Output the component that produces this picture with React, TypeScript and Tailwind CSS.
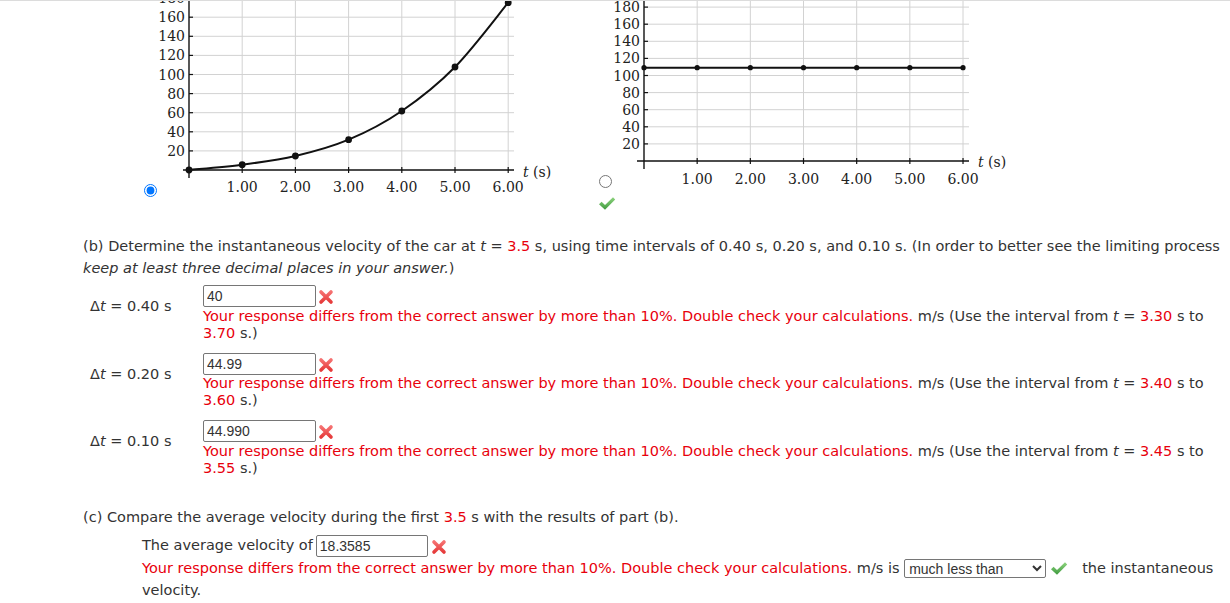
import React from "react";

// ---- graph helpers (page coordinates are used directly via viewBox offsets) ----
type Pt = [number, number];

function smoothPath(pts: Pt[]) {
  let d = `M${pts[0][0]},${pts[0][1]}`;
  for (let i = 0; i < pts.length - 1; i++) {
    const p0 = pts[i - 1] ?? pts[i];
    const p1 = pts[i];
    const p2 = pts[i + 1];
    const p3 = pts[i + 2] ?? p2;
    const c1x = p1[0] + (p2[0] - p0[0]) / 6;
    const c1y = p1[1] + (p2[1] - p0[1]) / 6;
    const c2x = p2[0] - (p3[0] - p1[0]) / 6;
    const c2y = p2[1] - (p3[1] - p1[1]) / 6;
    d += ` C${c1x},${c1y} ${c2x},${c2y} ${p2[0]},${p2[1]}`;
  }
  return d;
}

const GRID = "#d2d2d2";
const SERIF = "'DejaVu Serif', serif";

function Graph({
  vb,
  w,
  h,
  x0,
  y0,
  sx,
  sy,
  xEnd,
  axisTop,
  axisLeft,
  labelX,
  tickBase,
  tLabel,
  children,
}: {
  vb: string;
  w: number;
  h: number;
  x0: number;
  y0: number;
  sx: number;
  sy: number;
  xEnd: number;
  axisTop: number;
  axisLeft: number;
  labelX: number;
  tickBase: number;
  tLabel: Pt;
  children?: React.ReactNode;
}) {
  const ts = [1, 2, 3, 4, 5, 6];
  const vs = [20, 40, 60, 80, 100, 120, 140, 160, 180];
  return (
    <svg width={w} height={h} viewBox={vb} className="block shrink-0 overflow-visible">
      {ts.map((t) => (
        <line key={t} x1={x0 + sx * t} x2={x0 + sx * t} y1={axisTop} y2={y0} stroke={GRID} strokeWidth={1} />
      ))}
      {vs.map((v) => (
        <line key={v} x1={x0} x2={xEnd} y1={y0 - sy * v} y2={y0 - sy * v} stroke={GRID} strokeWidth={1} />
      ))}
      {/* axes */}
      <line x1={x0} x2={x0} y1={axisTop} y2={y0 + 8} stroke="#111" strokeWidth={1.4} />
      <line x1={axisLeft} x2={xEnd} y1={y0} y2={y0} stroke="#111" strokeWidth={1.4} />
      {ts.map((t) => (
        <line key={t} x1={x0 + sx * t} x2={x0 + sx * t} y1={y0 - 3} y2={y0 + 3} stroke="#111" strokeWidth={1.2} />
      ))}
      {vs.map((v) => (
        <line key={v} x1={x0} x2={x0 + 4} y1={y0 - sy * v} y2={y0 - sy * v} stroke="#111" strokeWidth={1.2} />
      ))}
      {vs.map((v) => (
        <text key={v} x={labelX} y={y0 - sy * v + 5} textAnchor="end" fontFamily={SERIF} fontSize={14} fill="#222">
          {v}
        </text>
      ))}
      {ts.map((t) => (
        <text key={t} x={x0 + sx * t} y={tickBase} textAnchor="middle" fontFamily={SERIF} fontSize={14} fill="#222">
          {t.toFixed(2)}
        </text>
      ))}
      <text x={tLabel[0]} y={tLabel[1]} fontFamily={SERIF} fontSize={14} fill="#222">
        <tspan fontStyle="italic">t</tspan> (s)
      </text>
      {children}
    </svg>
  );
}

function CrossIcon() {
  return (
    <svg width="16" height="16" viewBox="0 0 16 16" className="shrink-0">
      <defs>
        <linearGradient id="xg" x1="0" y1="0" x2="0" y2="1">
          <stop offset="0" stopColor="#f57070" />
          <stop offset="1" stopColor="#e63b3b" />
        </linearGradient>
      </defs>
      <path d="M3 3 L13 13 M13 3 L3 13" stroke="url(#xg)" strokeWidth="3.6" strokeLinecap="round" />
    </svg>
  );
}

function CheckIcon() {
  return (
    <svg width="18" height="15" viewBox="0 0 18 15" className="shrink-0">
      <defs>
        <linearGradient id="cg" x1="0" y1="0" x2="0" y2="1">
          <stop offset="0" stopColor="#8fd47f" />
          <stop offset="1" stopColor="#3e9a3e" />
        </linearGradient>
      </defs>
      <path d="M1 8.2 L3.6 5.8 L7 9 L15 1.2 L17.2 3.4 L7 13.8 Z" fill="url(#cg)" />
    </svg>
  );
}

const INPUT =
  "h-[22px] border border-[#767676] rounded-[2px] px-[3px] text-[14px] leading-none text-[#333] font-['Liberation_Sans',Arial,sans-serif] bg-white";

const RED = "text-[#e8000c]";

const ROWS = [
  { dt: "0.40", val: "40", from: "3.30", to: "3.70" },
  { dt: "0.20", val: "44.99", from: "3.40", to: "3.60" },
  { dt: "0.10", val: "44.990", from: "3.45", to: "3.55" },
];

export default function App() {
  const lx0 = 189;
  const lsx = 53.2;
  const leftPts: Pt[] = [170, 164.7, 156, 139.7, 111, 67, 2.7].map((y, i) => [lx0 + lsx * i, y]);
  const rx0 = 644;
  const rsx = 53.17;
  const rightPts: Pt[] = [0, 1, 2, 3, 4, 5, 6].map((i) => [rx0 + rsx * i, 67.7]);

  return (
    <div className="w-[1230px] h-[603px] overflow-hidden bg-white border-t border-[#dcdcdc] text-[#333] text-[14.5px] font-['DejaVu_Sans',Verdana,sans-serif]">
      {/* graphs with answer choices */}
      <div className="flex h-[234px]">
        <div className="flex pl-[144px]">
          <input type="radio" checked readOnly className="m-0 mt-[183px] w-[13px] h-[13px]" />
          <div className="ml-[1px]">
            <Graph
              vb="158 1 402 200"
              w={402}
              h={200}
              x0={lx0}
              y0={170}
              sx={lsx}
              sy={0.955}
              xEnd={514}
              axisTop={-6}
              axisLeft={183}
              labelX={185}
              tickBase={192}
              tLabel={[523, 177]}
            >
              <path d={smoothPath(leftPts)} fill="none" stroke="#111" strokeWidth={2} />
              {leftPts.map(([x, y], i) => (
                <circle key={i} cx={x} cy={y} r={3.4} fill="#111" />
              ))}
            </Graph>
          </div>
        </div>
        <div className="flex flex-col items-start ml-[39px] w-[12px]">
          <input type="radio" readOnly className="m-0 mt-[174px] w-[13px] h-[13px] shrink-0" />
          <div className="mt-[8px] -ml-[1px]">
            <CheckIcon />
          </div>
        </div>
        <div>
          <Graph
            vb="611 1 404 192"
            w={404}
            h={192}
            x0={rx0}
            y0={161}
            sx={rsx}
            sy={0.855}
            xEnd={969}
            axisTop={0}
            axisLeft={637}
            labelX={640}
            tickBase={183.5}
            tLabel={[978, 167]}
          >
            <line x1={rightPts[0][0]} x2={rightPts[6][0]} y1={67.7} y2={67.7} stroke="#111" strokeWidth={2} />
            {rightPts.map(([x, y], i) => (
              <circle key={i} cx={x} cy={y} r={2.6} fill="#111" />
            ))}
          </Graph>
        </div>
      </div>

      {/* part (b) */}
      <p className="pl-[83px] pr-[4px] leading-[22px]">
        (b) Determine the instantaneous velocity of the car at <i>t</i> = <span className={RED}>3.5</span> s, using
        time intervals of 0.40 s, 0.20 s, and 0.10 s. (In order to better see the limiting process{" "}
        <i>keep at least three decimal places in your answer.</i>)
      </p>

      <div className="mt-[6px] flex flex-col gap-[11px]">
        {ROWS.map((r) => (
          <div key={r.dt} className="flex pl-[90px]">
            <div className="w-[113px] shrink-0 pt-[13px] leading-[17px]">
              Δ<i>t</i> = {r.dt} s
            </div>
            <div className="flex-1 pr-[5px]">
              <div className="flex items-start gap-[2px]">
                <input readOnly value={r.val} className={`${INPUT} w-[113px]`} />
                <div className="mt-[4px]">
                  <CrossIcon />
                </div>
              </div>
              <p className="leading-[17px] mt-[0.5px]">
                <span className={RED}>
                  Your response differs from the correct answer by more than 10%. Double check your calculations.
                </span>{" "}
                m/s (Use the interval from <i>t</i> = <span className={RED}>{r.from}</span> s to{" "}
                <span className={RED}>{r.to}</span> s.)
              </p>
            </div>
          </div>
        ))}
      </div>

      {/* part (c) */}
      <p className="mt-[29px] pl-[83px] leading-[22px]">
        (c) Compare the average velocity during the first <span className={RED}>3.5</span> s with the results of
        part (b).
      </p>
      <div className="mt-[7px] pl-[142px] pr-[8px]">
        <div className="flex items-center h-[22px]">
          <span>The average velocity of</span>
          <input readOnly value="18.3585" className={`${INPUT} ml-[3px] w-[112px] h-[21px]`} />
          <div className="ml-[3px] mt-[3px]">
            <CrossIcon />
          </div>
        </div>
        <p className="leading-[22px]">
          <span className={RED}>
            Your response differs from the correct answer by more than 10%. Double check your calculations.
          </span>{" "}
          m/s is{" "}
          <select
            defaultValue="much less than"
            className="w-[142px] h-[19px] align-middle border border-[#767676] rounded-[2px] text-[14px] text-[#333] bg-white font-['Liberation_Sans',Arial,sans-serif]"
          >
            <option>much less than</option>
            <option>less than</option>
            <option>equal to</option>
            <option>greater than</option>
          </select>
          <span className="inline-block align-middle ml-[4px] mr-[14px]">
            <CheckIcon />
          </span>
          the instantaneous velocity.
        </p>
      </div>
    </div>
  );
}
